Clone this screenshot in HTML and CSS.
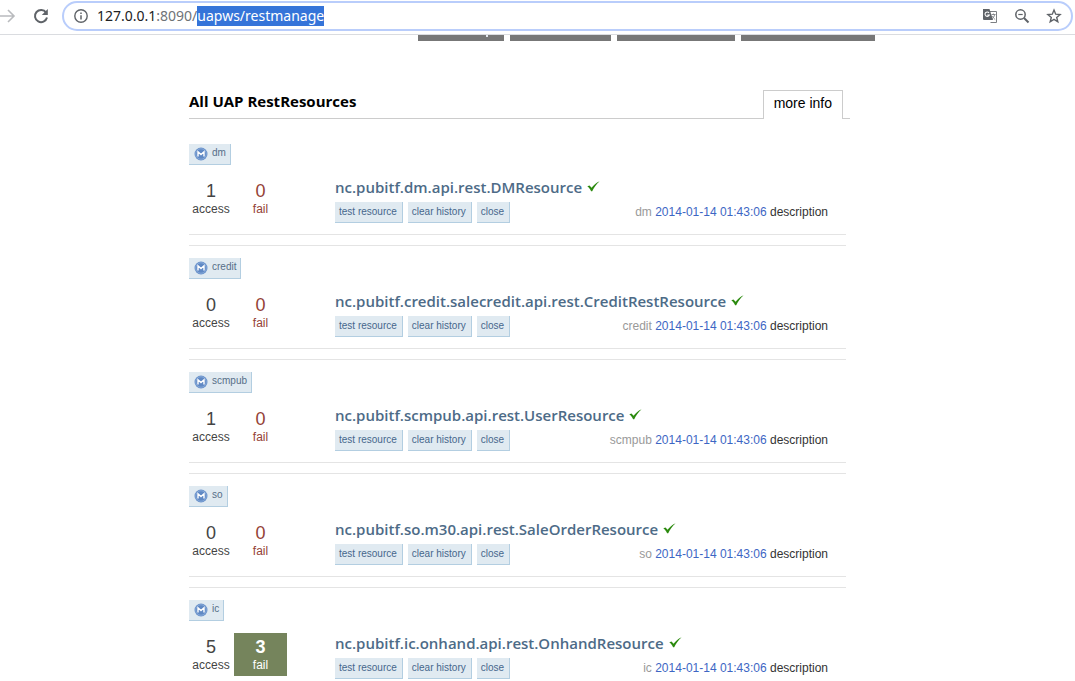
FILE: index.html
```html
<!DOCTYPE html>
<html lang="en">
<head>
    <meta charset="UTF-8">
    <title>All UAP RestResources</title>
    <link rel="stylesheet" href="styles.css">
</head>
<body>

<svg class="symbols" aria-hidden="true">
    <symbol id="module" viewBox="0 0 14 14">
        <circle cx="7" cy="7" r="6.5" fill="#6b93cb"/>
        <circle cx="7" cy="7" r="5.2" fill="#6089c4" stroke="#8fb0dc" stroke-width=".7"/>
        <path d="M4 9.6V4.8L7 7.6L10 4.8V9.6" fill="none" stroke="#fff" stroke-width="1.4"/>
    </symbol>
    <symbol id="check" viewBox="0 0 13 11">
        <path d="M.3 5.3L2.5 4.4L4.6 6.8C6.5 4.2 9 1.8 12.6 .2C9.3 3.2 7 6.3 5.2 10.3H4.1C3.2 8.3 2 6.6 .3 5.3Z" fill="#2b8a0e"/>
    </symbol>
</svg>

<header class="toolbar">
    <button class="icon-button forward" aria-label="Forward">
        <svg width="16" height="16" viewBox="0 0 16 16" fill="none" stroke="#b9bbbe" stroke-width="1.6"><path d="M0 8H14M8 2L14 8L8 14"/></svg>
    </button>
    <button class="icon-button reload" aria-label="Reload">
        <svg width="16" height="16" viewBox="0 0 16 16"><path d="M13.1 4.6A6.1 6.1 0 1 0 14 9.6" fill="none" stroke="#5f6368" stroke-width="2"/><path d="M14.8 1V7H8.8Z" fill="#5f6368"/></svg>
    </button>
    <div class="address">
        <svg width="14" height="14" viewBox="0 0 14 14"><circle cx="7" cy="7" r="6.2" fill="none" stroke="#5f6368" stroke-width="1.4"/><path d="M7 6.2V10.4M7 3.4V5" stroke="#5f6368" stroke-width="1.5"/></svg>
        <label class="host" for="path">127.0.0.1<span class="port">:8090/</span></label>
        <input id="path" class="path" type="text" value="uapws/restmanage" size="16">
        <div class="actions">
            <button class="icon-button" aria-label="Translate">
                <svg width="16" height="16" viewBox="0 0 16 16"><path d="M6 3.5H14.5V14.5H8.5" fill="#fff" stroke="#7d8084"/><path d="M1 1H7.5L11 12H2Q1 12 1 11Z" fill="#5f6368"/><path d="M7 4.8A2.2 2.2 0 1 0 7.3 7H5.3" fill="none" stroke="#fff" stroke-width="1.1"/><path d="M9.5 6.5H13.5M11.4 5.5V6.5M12.8 6.5Q12 9.5 10 11M10.4 8Q11.4 10.3 13.2 11.6" fill="none" stroke="#7d8084" stroke-width=".9"/></svg>
            </button>
            <button class="icon-button" aria-label="Zoom">
                <svg width="16" height="16" viewBox="0 0 16 16" fill="none" stroke="#5f6368"><circle cx="6.5" cy="6.5" r="4.7" stroke-width="1.5"/><path d="M10 10L14.5 14.5" stroke-width="2"/><path d="M4.3 6.5H8.7" stroke-width="1.2"/></svg>
            </button>
            <button class="icon-button" aria-label="Bookmark">
                <svg width="16" height="16" viewBox="0 0 16 16"><path d="M8 2L9.7 6.2L14.1 6.5L10.7 9.4L11.8 13.8L8 11.4L4.2 13.8L5.3 9.4L1.9 6.5L6.3 6.2Z" fill="none" stroke="#5f6368" stroke-width="1.4"/></svg>
            </button>
        </div>
    </div>
</header>

<main class="page">
    <nav class="tabs">
        <a class="tab tab-first" href="#" aria-label="Home"></a>
        <a class="tab tab-second" href="#" aria-label="Services"></a>
        <a class="tab tab-third" href="#" aria-label="Resources"></a>
        <a class="tab tab-fourth" href="#" aria-label="Management"></a>
    </nav>

    <div class="heading">
        <h1>All UAP RestResources</h1>
        <a class="more" href="#">more info</a>
    </div>

    <ul class="resources">
        <li class="resource">
            <a class="tag" href="#"><svg class="module"><use href="#module"/></svg>dm</a>
            <div class="row">
                <div class="stat"><b>1</b>access</div>
                <div class="stat fail"><b>0</b>fail</div>
                <div class="detail">
                    <h2><a href="#">nc.pubitf.dm.api.rest.DMResource</a><svg class="check"><use href="#check"/></svg></h2>
                    <div class="line">
                        <button class="action">test resource</button>
                        <button class="action">clear history</button>
                        <button class="action">close</button>
                        <p class="meta">dm <a href="#">2014-01-14 01:43:06</a> <span>description</span></p>
                    </div>
                </div>
            </div>
        </li>
        <li class="resource">
            <a class="tag" href="#"><svg class="module"><use href="#module"/></svg>credit</a>
            <div class="row">
                <div class="stat"><b>0</b>access</div>
                <div class="stat fail"><b>0</b>fail</div>
                <div class="detail">
                    <h2><a href="#">nc.pubitf.credit.salecredit.api.rest.CreditRestResource</a><svg class="check"><use href="#check"/></svg></h2>
                    <div class="line">
                        <button class="action">test resource</button>
                        <button class="action">clear history</button>
                        <button class="action">close</button>
                        <p class="meta">credit <a href="#">2014-01-14 01:43:06</a> <span>description</span></p>
                    </div>
                </div>
            </div>
        </li>
        <li class="resource">
            <a class="tag" href="#"><svg class="module"><use href="#module"/></svg>scmpub</a>
            <div class="row">
                <div class="stat"><b>1</b>access</div>
                <div class="stat fail"><b>0</b>fail</div>
                <div class="detail">
                    <h2><a href="#">nc.pubitf.scmpub.api.rest.UserResource</a><svg class="check"><use href="#check"/></svg></h2>
                    <div class="line">
                        <button class="action">test resource</button>
                        <button class="action">clear history</button>
                        <button class="action">close</button>
                        <p class="meta">scmpub <a href="#">2014-01-14 01:43:06</a> <span>description</span></p>
                    </div>
                </div>
            </div>
        </li>
        <li class="resource">
            <a class="tag" href="#"><svg class="module"><use href="#module"/></svg>so</a>
            <div class="row">
                <div class="stat"><b>0</b>access</div>
                <div class="stat fail"><b>0</b>fail</div>
                <div class="detail">
                    <h2><a href="#">nc.pubitf.so.m30.api.rest.SaleOrderResource</a><svg class="check"><use href="#check"/></svg></h2>
                    <div class="line">
                        <button class="action">test resource</button>
                        <button class="action">clear history</button>
                        <button class="action">close</button>
                        <p class="meta">so <a href="#">2014-01-14 01:43:06</a> <span>description</span></p>
                    </div>
                </div>
            </div>
        </li>
        <li class="resource">
            <a class="tag" href="#"><svg class="module"><use href="#module"/></svg>ic</a>
            <div class="row">
                <div class="stat"><b>5</b>access</div>
                <div class="stat fail failed"><b>3</b>fail</div>
                <div class="detail">
                    <h2><a href="#">nc.pubitf.ic.onhand.api.rest.OnhandResource</a><svg class="check"><use href="#check"/></svg></h2>
                    <div class="line">
                        <button class="action">test resource</button>
                        <button class="action">clear history</button>
                        <button class="action">close</button>
                        <p class="meta">ic <a href="#">2014-01-14 01:43:06</a> <span>description</span></p>
                    </div>
                </div>
            </div>
        </li>
    </ul>
</main>

</body>
</html>
```
FILE: styles.css
```css
* {
    box-sizing: border-box;
}

body {
    display: flex;
    flex-direction: column;
    height: 100vh;
    margin: 0;
    overflow: hidden;
    background: #fff;
    font: 12px/18px "Liberation Sans", Arial, sans-serif;
    color: #444;
}

a {
    color: inherit;
    text-decoration: none;
}

h1, h2, p, ul {
    margin: 0;
    padding: 0;
}

.symbols {
    display: none;
}

/* browser bar */
.toolbar {
    display: flex;
    flex: none;
    align-items: center;
    height: 35px;
    padding: 0 2px 2px 0;
    border-bottom: 1px solid #dadce0;
}

.icon-button {
    display: flex;
    padding: 0;
    border: 0;
    background: none;
}

.reload {
    margin: 0 13px 0 17px;
}

.address {
    display: flex;
    flex: 1;
    align-items: center;
    height: 30px;
    padding: 0 9px 0 10px;
    border: 2px solid #b9cdfb;
    border-radius: 15px;
    font: 14px/20px "Noto Sans", "Open Sans", sans-serif;
    color: #202124;
}

.host {
    margin-left: 9px;
}

.port {
    color: #6f7377;
}

.path {
    field-sizing: content;
    height: 20px;
    padding: 0;
    border: 0;
    background: #3574d9;
    font: inherit;
    color: #fff;
}

.actions {
    display: flex;
    gap: 16px;
    margin-left: auto;
}

/* page */
.page {
    flex: 1;
    min-height: 0;
    width: 100%;
    max-width: 697px;
    margin: 0 auto;
    padding-right: 36px;
}

.tabs {
    display: flex;
    gap: 6px;
    height: 6px;
    margin-left: 229px;
}

.tab {
    flex: none;
    background: #777;
}

.tab-first {
    width: 86px;
}

.tab-second {
    width: 101px;
}

.tab-third {
    width: 118px;
}

.tab-fourth {
    width: 134px;
}

.tab-first::after {
    content: "";
    display: block;
    width: 2px;
    height: 2px;
    margin-left: 68px;
    background: #e4e8ee;
}

.heading {
    display: flex;
    justify-content: space-between;
    height: 29px;
    margin-top: 49px;
    padding-right: 7px;
    border-bottom: 1px solid #ccc;
}

h1 {
    font: 700 15px/22px "Open Sans", "Noto Sans", sans-serif;
    color: #000;
}

.more {
    height: 29px;
    padding: 0 10px;
    border: 1px solid #ccc;
    border-bottom: 0;
    background: #fff;
    font-size: 14px;
    line-height: 24px;
    color: #000;
}

.resources {
    margin-right: 4px;
    list-style: none;
}

.resource {
    height: 104px;
    margin-top: 10px;
    padding-top: 12px;
    border-top: 1px solid #e4e4e4;
    border-bottom: 1px solid #e4e4e4;
}

.resource:first-child {
    margin-top: 12px;
    border-top-color: transparent;
}

.tag,
.action {
    height: 21px;
    border: 0;
    border-right: 1px solid #b3cee1;
    border-bottom: 1px solid #b3cee1;
    background: #e0eaf1;
    font: 10px/18px "Liberation Sans", Arial, sans-serif;
}

.tag {
    display: flex;
    width: fit-content;
    padding: 0 4px 0 5px;
    color: #566e88;
}

.module {
    width: 14px;
    height: 14px;
    margin: 3px 4px 0 0;
}

.row {
    display: flex;
    margin-top: 12px;
}

.stat {
    width: 44px;
    height: 43px;
    padding-top: 5px;
    text-align: center;
}

.stat b {
    display: block;
    font-size: 18px;
    font-weight: normal;
    line-height: 18px;
}

.fail {
    width: 53px;
    margin-left: 1px;
    color: #944237;
}

.failed {
    background: #75845c;
    color: #fff;
}

.failed b {
    font-weight: bold;
}

.detail {
    flex: 1;
    margin-left: 48px;
    padding-right: 18px;
}

h2 {
    display: flex;
    align-items: center;
    gap: 5px;
    height: 20px;
    font: 600 15px/18px "Open Sans", "Noto Sans", sans-serif;
    color: #4d6b87;
}

.check {
    width: 13px;
    height: 11px;
    margin-bottom: 2px;
}

.line {
    display: flex;
    gap: 5px;
    margin-top: 5px;
}

.action {
    padding: 0 5px 0 4px;
    color: #46678c;
}

.meta {
    margin-left: auto;
    line-height: 20px;
    color: #999;
}

.meta a {
    color: #3d66c4;
}

.meta span {
    color: #333;
}
```
